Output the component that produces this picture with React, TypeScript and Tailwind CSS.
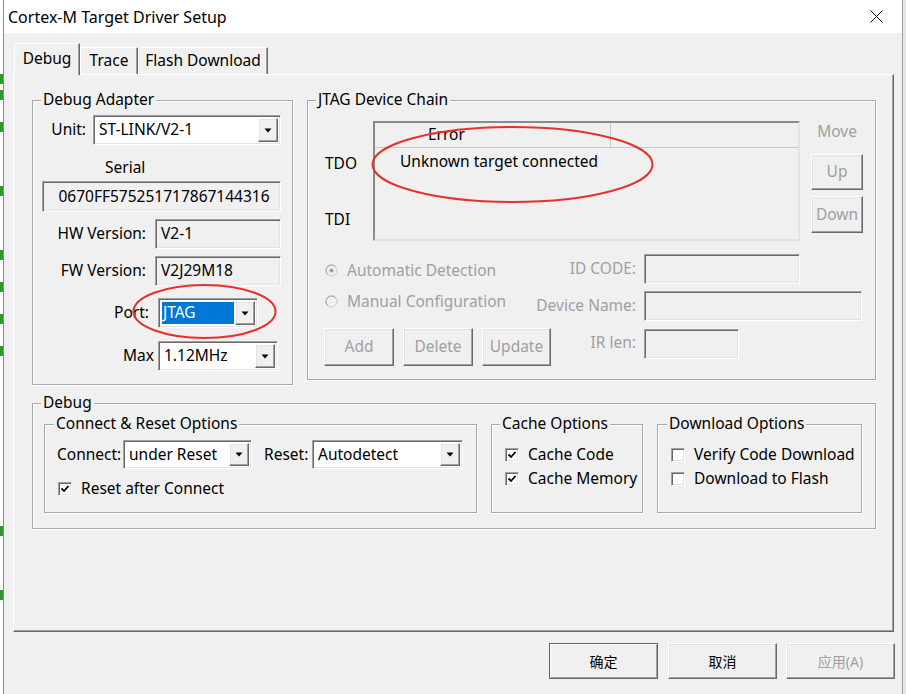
import React from "react";

const sunken =
  "border border-t-[#a0a0a0] border-l-[#a0a0a0] border-b-white border-r-white shadow-[inset_1px_1px_0_#696969,inset_-1px_-1px_0_#e3e3e3]";
const raised =
  "border border-t-white border-l-white border-b-[#696969] border-r-[#696969] shadow-[inset_-1px_-1px_0_#a0a0a0,inset_1px_1px_0_#e3e3e3]";
const group =
  "border border-[#a9a9a9] shadow-[inset_1px_1px_0_#fff,1px_1px_0_#fff] p-0 m-0 min-w-0";
const legend = "px-[2px] leading-[18px] pb-[2px] bg-[#f0f0f0]";

function Arrow() {
  return (
    <svg width="8" height="5" viewBox="0 0 8 5">
      <path d="M0.5 0.5h7L4 4.5z" fill="#000" />
    </svg>
  );
}

function Combo({
  value,
  className,
  selected,
}: {
  value: string;
  className: string;
  selected?: boolean;
}) {
  return (
    <div className={`${sunken} ${className} bg-white flex items-stretch p-[2px]`}>
      <div className="flex-1 min-w-0 flex items-stretch py-[1px] pl-[1px] pr-[1px]">
        {selected ? (
          <span className="flex-1 bg-[#0078d7] text-white flex items-center pl-[1px]">{value}</span>
        ) : (
          <span className="flex items-center pl-[2px] whitespace-nowrap">{value}</span>
        )}
      </div>
      <div className={`${raised} w-[20px] bg-[#f0f0f0] flex items-center justify-center`}>
        <Arrow />
      </div>
    </div>
  );
}

function Field({ value, className }: { value?: string; className: string }) {
  return (
    <div className={`${sunken} ${className} bg-[#f0f0f0] flex items-center pl-[5px] whitespace-nowrap`}>
      {value}
    </div>
  );
}

function Button({
  label,
  className,
  disabled,
}: {
  label: string;
  className: string;
  disabled?: boolean;
}) {
  return (
    <div
      className={`${raised} ${className} bg-[#f0f0f0] flex items-center justify-center ${
        disabled ? "text-[#a0a0a0]" : "text-black"
      }`}
    >
      {label}
    </div>
  );
}

function Check({ checked, label }: { checked?: boolean; label: string }) {
  return (
    <div className="flex items-center h-[20px] whitespace-nowrap">
      <div className={`${sunken} w-[14px] h-[14px] bg-white flex items-center justify-center shrink-0`}>
        {checked && (
          <svg width="10" height="10" viewBox="0 0 10 10">
            <path d="M1.5 4.5l2.5 2.5 4.5-5" stroke="#000" strokeWidth="1.8" fill="none" />
          </svg>
        )}
      </div>
      <span className="ml-[9px]">{label}</span>
    </div>
  );
}

function Radio({ checked, label }: { checked?: boolean; label: string }) {
  return (
    <div className="flex items-center h-[20px] whitespace-nowrap text-[#a0a0a0]">
      <svg width="13" height="13" viewBox="0 0 13 13" className="shrink-0">
        <circle cx="6.5" cy="6.5" r="5.5" fill="#f0f0f0" stroke="#c8c8c8" />
        <path d="M2.6 10.4A5.5 5.5 0 0 1 10.4 2.6" stroke="#a0a0a0" fill="none" />
        {checked && <circle cx="6.5" cy="6.5" r="2" fill="#a0a0a0" />}
      </svg>
      <span className="ml-[9px]">{label}</span>
    </div>
  );
}

// bits of the editor window that peek out behind the dialog
const greenMarks = [
  "mt-[74px]",
  "mt-[6px]",
  "mt-[22px]",
  "mt-[54px]",
  "mt-[54px]",
  "mt-[22px]",
  "mt-[22px]",
  "mt-[22px]",
  "mt-[170px]",
  "mt-[54px]",
];

export default function App() {
  return (
    <div className="relative w-[906px] h-[694px] flex overflow-hidden bg-white text-black text-[15.5px] font-['Noto_Sans','Noto_Sans_CJK_SC',sans-serif]">
      {/* background strip on the left */}
      <div className="w-[4px] border-r border-[#8c8c8c] bg-white flex flex-col">
        {greenMarks.map((c, i) => (
          <div key={i} className={`${c} w-[3px] h-[10px] bg-[#2e9a2e]`} />
        ))}
      </div>

      {/* window */}
      <div className="w-[898px] flex flex-col bg-[#f0f0f0]">
        <div className="h-[33px] bg-white flex items-center justify-between shrink-0">
          <span className="pl-[4px] text-[16px]">Cortex-M Target Driver Setup</span>
          <div className="w-[46px] mr-[3px] h-full flex items-center justify-center">
            <svg width="13" height="13" viewBox="0 0 13 13">
              <path d="M0.5 0.5l12 12M12.5 0.5l-12 12" stroke="#000" strokeWidth="1" />
            </svg>
          </div>
        </div>

        {/* tabs */}
        <div className="mt-[10px] ml-[10px] h-[31px] flex items-end">
          <div className="relative z-10 -mb-[1px] h-[32px] w-[66px] bg-[#f0f0f0] border-t border-l border-white border-r border-r-[#696969] shadow-[inset_-1px_0_0_#a0a0a0] flex items-start justify-center pt-[3px]">
            Debug
          </div>
          <div className="h-[27px] w-[58px] border-t border-l border-white border-r border-r-[#696969] shadow-[inset_-1px_0_0_#a0a0a0] flex items-center justify-center">
            Trace
          </div>
          <div className="h-[27px] w-[130px] border-t border-l border-white border-r border-r-[#696969] shadow-[inset_-1px_0_0_#a0a0a0] flex items-center justify-center">
            Flash Download
          </div>
        </div>

        {/* tab page */}
        <div className="ml-[9px] w-[881px] h-[558px] border border-t-white border-l-white border-b-[#696969] border-r-[#696969] shadow-[inset_-1px_-1px_0_#a0a0a0] flex flex-col">
          <div className="mt-[15px] pl-[18px] flex gap-[14px]">
            {/* Debug Adapter */}
            <fieldset className={`${group} w-[261px] h-[295px]`}>
              <legend className={`${legend} ml-[8px]`}>Debug Adapter</legend>
              <div className="flex flex-col">
                <div className="mt-[5px] flex items-center">
                  <span className="w-[53px] text-right">Unit:</span>
                  <Combo value="ST-LINK/V2-1" className="ml-[7px] w-[188px] h-[30px]" />
                </div>
                <span className="mt-[12px] ml-[72px] leading-[20px]">Serial</span>
                <Field value="0670FF575251717867144316" className="mt-[4px] ml-[9px] w-[239px] h-[31px] justify-center pl-0" />
                <div className="mt-[7px] flex items-center">
                  <span className="w-[113px] text-right">HW Version:</span>
                  <Field value="V2-1" className="ml-[9px] w-[126px] h-[30px]" />
                </div>
                <div className="mt-[7px] flex items-center">
                  <span className="w-[113px] text-right">FW Version:</span>
                  <Field value="V2J29M18" className="ml-[9px] w-[126px] h-[30px]" />
                </div>
                <div className="mt-[12px] flex items-center">
                  <span className="w-[116px] text-right">Port:</span>
                  <Combo value="JTAG" selected className="ml-[9px] w-[100px] h-[30px]" />
                </div>
                <div className="mt-[13px] flex items-center">
                  <span className="w-[121px] text-right">Max</span>
                  <Combo value="1.12MHz" className="ml-[4px] w-[120px] h-[30px]" />
                </div>
              </div>
            </fieldset>

            {/* JTAG Device Chain */}
            <fieldset className={`${group} w-[569px] h-[290px]`}>
              <legend className={`${legend} ml-[8px]`}>JTAG Device Chain</legend>
              <div className="mt-[11px] flex">
                <div className="w-[65px] pl-[17px] flex flex-col leading-[20px]">
                  <span className="mt-[32px]">TDO</span>
                  <span className="mt-[36px]">TDI</span>
                </div>
                <div className="w-[427px] h-[120px] border-2 border-t-[#8a8a8a] border-l-[#8a8a8a] border-b-[#e3e3e3] border-r-[#e3e3e3] bg-[#f0f0f0] flex flex-col">
                  <div className="h-[25px] flex border-b border-[#c8c8c8]">
                    <div className="w-[236px] border-r border-[#c8c8c8] pl-[53px] leading-[23px]">Error</div>
                    <div className="flex-1" />
                  </div>
                  <div className="pt-[3px] pl-[25px] leading-[20px]">Unknown target connected</div>
                </div>
                <div className="ml-[11px] w-[52px] flex flex-col">
                  <span className="leading-[20px] text-center text-[#a0a0a0]">Move</span>
                  <Button label="Up" disabled className="mt-[13px] h-[36px]" />
                  <Button label="Down" disabled className="mt-[6px] h-[37px]" />
                </div>
              </div>

              <div className="mt-[13px] h-[30px] flex items-center">
                <div className="w-[212px] pl-[17px] pt-[3px]">
                  <Radio checked label="Automatic Detection" />
                </div>
                <span className="w-[116px] text-right text-[#a0a0a0]">ID CODE:</span>
                <Field className="ml-[8px] w-[156px] h-[30px]" />
              </div>
              <div className="mt-[7px] h-[30px] flex items-center">
                <div className="w-[212px] pl-[17px] pb-[9px]">
                  <Radio label="Manual Configuration" />
                </div>
                <span className="w-[116px] text-right text-[#a0a0a0]">Device Name:</span>
                <Field className="ml-[8px] w-[218px] h-[30px]" />
              </div>
              <div className="mt-[7px] flex items-start">
                <div className="pl-[16px] flex">
                  <Button label="Add" disabled className="w-[70px] h-[38px]" />
                  <Button label="Delete" disabled className="ml-[9px] w-[70px] h-[38px]" />
                  <Button label="Update" disabled className="ml-[9px] w-[69px] h-[38px]" />
                </div>
                <span className="mt-[4px] w-[85px] leading-[20px] text-right text-[#a0a0a0]">IR len:</span>
                <Field className="mt-[1px] ml-[8px] w-[95px] h-[30px]" />
              </div>
            </fieldset>
          </div>

          {/* Debug options */}
          <fieldset className={`${group} mt-[8px] ml-[18px] w-[844px] h-[136px]`}>
            <legend className={`${legend} ml-[8px]`}>Debug</legend>
            <div className="mt-[1px] pl-[11px] flex gap-[14px]">
              <fieldset className={`${group} w-[433px] h-[99px]`}>
                <legend className={`${legend} ml-[9px]`}>Connect &amp; Reset Options</legend>
                <div className="mt-[6px] pl-[12px] h-[29px] flex items-center">
                  <span className="w-[66px]">Connect:</span>
                  <Combo value="under Reset" className="w-[129px] h-[29px]" />
                  <span className="ml-[12px] w-[48px]">Reset:</span>
                  <Combo value="Autodetect" className="w-[151px] h-[29px]" />
                </div>
                <div className="mt-[10px] pl-[13px]">
                  <Check checked label="Reset after Connect" />
                </div>
              </fieldset>

              <fieldset className={`${group} w-[152px] h-[99px]`}>
                <legend className={`${legend} ml-[8px]`}>Cache Options</legend>
                <div className="mt-[11px] pl-[13px] flex flex-col gap-[4px]">
                  <Check checked label="Cache Code" />
                  <Check checked label="Cache Memory" />
                </div>
              </fieldset>

              <fieldset className={`${group} w-[205px] h-[99px]`}>
                <legend className={`${legend} ml-[9px]`}>Download Options</legend>
                <div className="mt-[11px] pl-[13px] flex flex-col gap-[4px]">
                  <Check label="Verify Code Download" />
                  <Check label="Download to Flash" />
                </div>
              </fieldset>
            </div>
          </fieldset>
        </div>

        {/* dialog buttons */}
        <div className="mt-[11px] pr-[7px] flex justify-end text-[14px]">
          <div className="w-[109px] h-[36px] border border-[#646464] bg-[#f0f0f0] shadow-[inset_1px_1px_0_#fff,inset_-1px_-1px_0_#a0a0a0] flex items-center justify-center">
            确定
          </div>
          <Button label="取消" className="ml-[10px] w-[109px] h-[36px]" />
          <Button label="应用(A)" disabled className="ml-[9px] w-[109px] h-[36px]" />
        </div>
      </div>

      {/* right edge */}
      <div className="w-[4px] border-l border-[#a0a0a0] bg-[#e6e6e6]" />

      {/* red annotation ellipses */}
      <svg
        className="absolute left-0 top-0 pointer-events-none"
        width="906"
        height="694"
        viewBox="0 0 906 694"
      >
        <ellipse cx="204.5" cy="311.5" rx="71" ry="26.5" fill="none" stroke="#e8312e" strokeWidth="2" />
        <ellipse cx="512.5" cy="164.5" rx="140" ry="37.5" fill="none" stroke="#e8312e" strokeWidth="2" />
      </svg>
    </div>
  );
}
